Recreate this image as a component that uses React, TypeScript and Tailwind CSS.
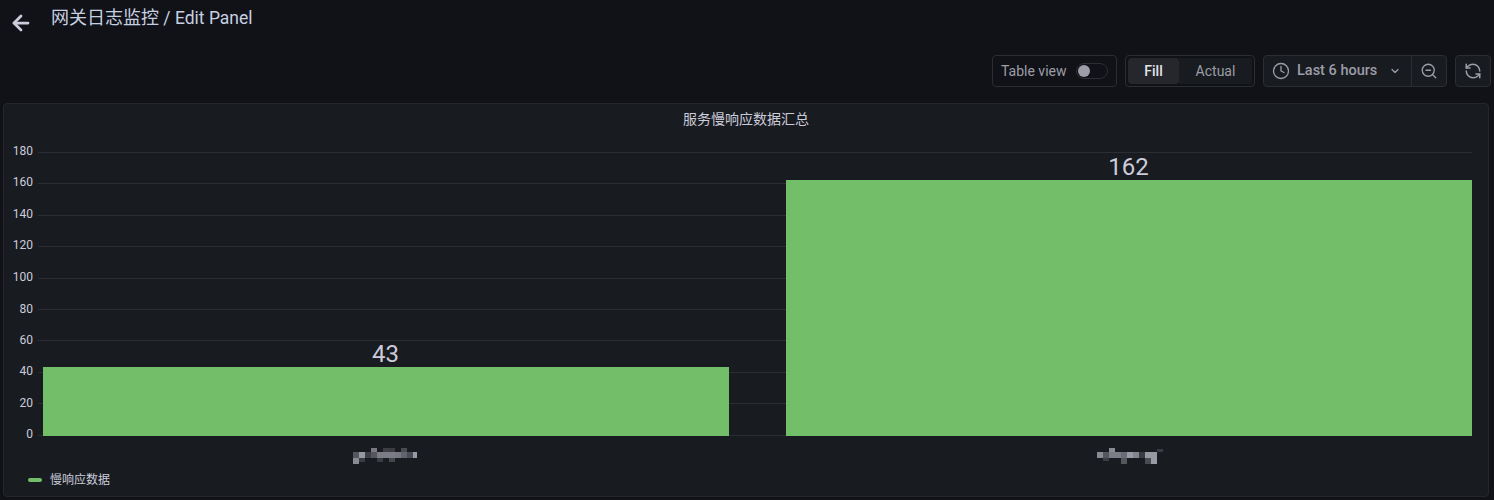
import { ArrowLeft, ChevronDown, Clock, RefreshCcw, ZoomOut } from "lucide-react";

const ticks: [string, number, number][] = [
  ["180", 152, 3], ["160", 183, 3], ["140", 215, 3], ["120", 246, 3], ["100", 278, 3],
  ["80", 309, 3.5], ["60", 340, 3.5], ["40", 372, 3], ["20", 403, 3.5], ["0", 435, 3],
];

// x, y, w, h, fill
const mosaic: [number, number, number, number, string][] = [
  [371, 448, 6, 4, "#7a7a85"], [383, 448, 6, 4, "#3d3e46"], [389, 448, 6, 4, "#3a3b43"], [401, 448, 6, 4, "#4a4b53"],
  [353, 452, 6, 6, "#55565e"], [359, 452, 6, 6, "#9898a2"], [365, 452, 6, 6, "#3e3f47"], [371, 452, 6, 6, "#55565e"],
  [377, 452, 6, 6, "#7c7c87"], [383, 452, 6, 6, "#7c7c87"], [389, 452, 6, 6, "#7c7c87"], [395, 452, 6, 6, "#777782"],
  [401, 452, 6, 6, "#62636c"], [407, 452, 6, 6, "#4a4b53"], [413, 452, 4, 6, "#9a9aa4"],
  [353, 458, 6, 6, "#8a8a94"], [359, 458, 6, 4, "#3a3b43"], [377, 458, 6, 4, "#3a3b43"], [389, 458, 6, 4, "#44454d"],
  [1109, 448, 6, 4, "#8a8a94"], [1157, 449, 6, 3, "#3a3b43"],
  [1097, 452, 6, 6, "#8a8a94"], [1103, 452, 6, 6, "#55565e"], [1109, 452, 6, 6, "#7c7c87"], [1115, 452, 6, 6, "#7c7c87"],
  [1121, 452, 6, 6, "#6a6b75"], [1127, 452, 6, 6, "#9a9aa4"], [1133, 452, 6, 6, "#85858f"], [1139, 452, 6, 6, "#3a3b43"],
  [1145, 452, 6, 6, "#9898a2"], [1151, 452, 6, 6, "#9898a2"],
  [1103, 458, 6, 3, "#3a3b43"], [1121, 458, 6, 6, "#55565e"], [1145, 458, 6, 6, "#4a4b53"], [1151, 458, 6, 6, "#9a9aa4"],
];

export default function App() {
  return (
    <div className="h-[500px] w-[1494px] overflow-hidden bg-[#111217] font-['Roboto','Noto_Sans_CJK_SC',sans-serif] text-[#ccccdc]">
      <header className="flex h-[55px] items-start">
        <ArrowLeft className="ml-[9px] mt-[11px] text-[#ccccdc]" size={24} strokeWidth={2.75} />
        <h1 className="ml-[18px] mt-[6px] text-[18px] leading-[24px] font-normal text-[#c7d0e0]">
          网关日志监控<span className="text-[17.5px]"> / Edit Panel</span>
        </h1>
      </header>

      <div className="flex h-[32px] justify-end gap-2 pr-[3px] text-[14px]">
        <div className="flex w-[125px] items-center rounded-sm border border-[#2c2d33] pl-2 text-[#9d9da8]">
          <span className="w-[67px]">Table view</span>
          <span className="ml-[8px] flex h-[16px] w-[32px] items-center rounded-full border border-[#2c2d33] pl-[1px]">
            <span className="h-[12px] w-[12px] rounded-full bg-[#9d9da8]" />
          </span>
        </div>

        <div className="flex w-[130px] items-center rounded-sm border border-[#2c2d33] p-[2px]">
          <div className="flex h-[26px] w-[51px] items-center justify-center rounded-sm bg-[#26272d] font-medium text-[#e4e5ea]">Fill</div>
          <div className="flex h-[26px] flex-1 items-center justify-center bg-[#181b1f] text-[#9d9da8]">Actual</div>
        </div>

        <div className="flex w-[184px] rounded-sm border border-[#2c2d33] bg-[#181b1f] text-[#9d9da8]">
          <div className="flex w-[148px] items-center border-r border-[#2c2d33] pl-[8px]">
            <Clock size={18} strokeWidth={1.75} />
            <span className="ml-[7px] text-[14.5px] font-medium">Last 6 hours</span>
            <ChevronDown className="ml-[12px]" size={12} strokeWidth={2.5} />
          </div>
          <div className="flex flex-1 items-center justify-center">
            <ZoomOut size={18} strokeWidth={1.75} />
          </div>
        </div>

        <div className="flex w-[36px] items-center justify-center rounded-sm border border-[#2c2d33] bg-[#181b1f] text-[#9d9da8]">
          <RefreshCcw size={18} strokeWidth={2} />
        </div>
      </div>

      <section className="ml-[3px] mt-[16px] flex h-[394px] w-[1486px] flex-col rounded-sm border border-[#25262b] bg-[#181b1f]">
        <h2 className="flex h-[30px] shrink-0 items-center justify-center text-[14px] font-normal text-[#ccccdc]">
          服务慢响应数据汇总
        </h2>
        <svg className="block shrink-0" width={1484} height={332} viewBox="4 134 1484 332">
          {ticks.map(([label, y, dy]) => (
            <g key={label}>
              <line x1={38} x2={1472} y1={y + 0.5} y2={y + 0.5} stroke="#2b2d33" />
              <text x={33} y={y + dy} textAnchor="end" fontSize={12} fill="#ccccdc" fontFamily="Roboto">{label}</text>
            </g>
          ))}
          <rect x={43} y={367} width={686} height={69} fill="#73bf69" />
          <rect x={786} y={180} width={686} height={256} fill="#73bf69" />
          <text x={385.5} y={362} textAnchor="middle" fontSize={24} fill="#ccccdc" fontFamily="Roboto">43</text>
          <text x={1128.5} y={175} textAnchor="middle" fontSize={24} fill="#ccccdc" fontFamily="Roboto">162</text>
          {mosaic.map(([x, y, w, h, fill], i) => (
            <rect key={i} x={x} y={y} width={w} height={h} fill={fill} />
          ))}
        </svg>
        <div className="flex flex-1 items-center pb-[3px] pl-[24px] text-[12px] text-[#ccccdc]">
          <span className="h-[4px] w-[14px] rounded-sm bg-[#73bf69]" />
          <span className="ml-[8px]">慢响应数据</span>
        </div>
      </section>
    </div>
  );
}
